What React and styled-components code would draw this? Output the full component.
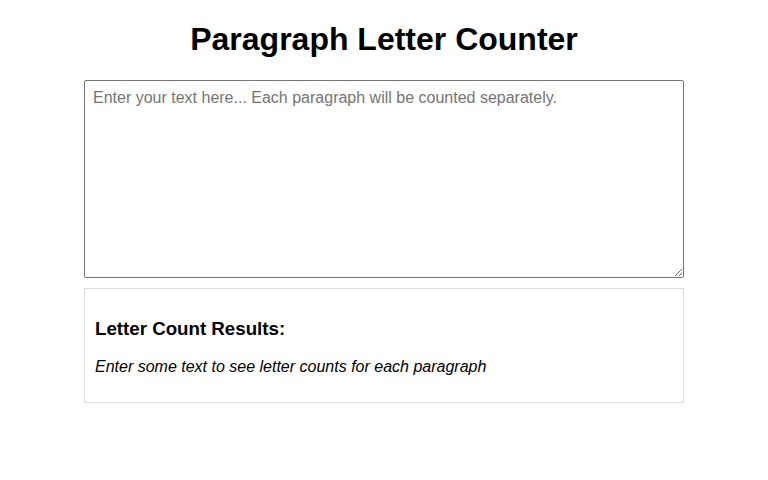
import React, { useState } from "react";
import styled, { createGlobalStyle } from "styled-components";

const GlobalStyle = createGlobalStyle`
  body {
    margin: 0;
    background: #fff;
    font-family: "Liberation Sans", Arial, sans-serif;
    color: #000;
  }
`;

const Container = styled.div`
  max-width: 600px;
  margin: 0 auto;
  padding: 20px 0;
`;

const Title = styled.h1`
  margin: 1px 0 22px;
  font-size: 32px;
  line-height: 37px;
  font-weight: bold;
  text-align: center;
`;

const TextArea = styled.textarea`
  display: block;
  box-sizing: border-box;
  width: 100%;
  height: 198px;
  margin: 0;
  padding: 8px;
  border: 1px solid #767676;
  border-radius: 2px;
  font-family: "Liberation Sans", Arial, sans-serif;
  font-size: 16px;
  line-height: 18px;
  resize: vertical;

  &::placeholder {
    color: #757575;
  }
`;

const Results = styled.div`
  box-sizing: border-box;
  margin-top: 10px;
  padding: 10px;
  border: 1px solid #ddd;
`;

const ResultsTitle = styled.h3`
  margin: 18.72px 0;
  font-size: 18.72px;
  font-weight: bold;
`;

const Hint = styled.p`
  margin: 16px 0;
  font-size: 16px;
  font-style: italic;
`;

const Row = styled.p`
  margin: 8px 0;
  font-size: 16px;
`;

export default function App() {
  const [text, setText] = useState("");
  const paragraphs = text
    .split(/\n\s*\n/)
    .map((p) => p.trim())
    .filter(Boolean);

  return (
    <>
      <GlobalStyle />
      <Container>
        <Title>Paragraph Letter Counter</Title>
        <TextArea
          value={text}
          onChange={(e) => setText(e.target.value)}
          placeholder="Enter your text here... Each paragraph will be counted separately."
        />
        <Results>
          <ResultsTitle>Letter Count Results:</ResultsTitle>
          {paragraphs.length === 0 ? (
            <Hint>Enter some text to see letter counts for each paragraph</Hint>
          ) : (
            paragraphs.map((p, i) => (
              <Row key={i}>
                Paragraph {i + 1}: {(p.match(/[a-zA-Z]/g) || []).length} letters
              </Row>
            ))
          )}
        </Results>
      </Container>
    </>
  );
}
